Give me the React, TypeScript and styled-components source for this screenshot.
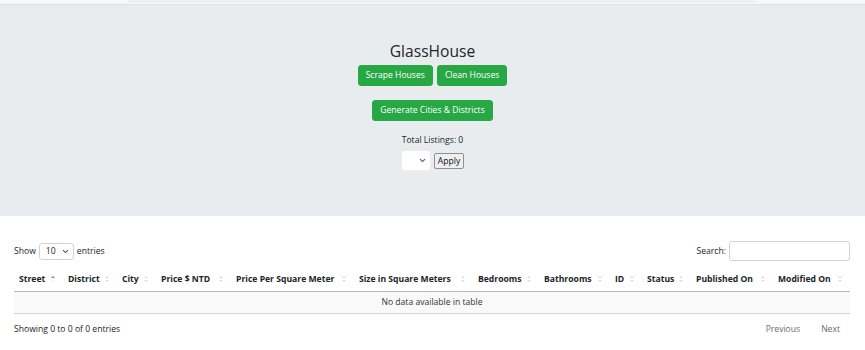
import React from "react";
import styled, { createGlobalStyle } from "styled-components";

const Global = createGlobalStyle`
  html, body { margin: 0; padding: 0; background: #fff; }
  body {
    font-family: "Open Sans", "Noto Sans", "Liberation Sans", sans-serif;
    color: #212529;
    width: 865px;
    overflow: hidden;
  }
  * { box-sizing: border-box; }
`;

const TopStrip = styled.div`
  height: 5px;
  background: #f8f8fa;
  border-bottom: 1px solid #dfe0e3;
  display: flex;
`;

const TopTab = styled.div`
  margin-left: 128px;
  width: 628px;
  height: 3px;
  background: #efeff2;
`;

const Jumbo = styled.section`
  background: #e9ecef;
  height: 211px;
  display: flex;
  flex-direction: column;
  align-items: center;
  padding-top: 36px;
`;

const Title = styled.h1`
  margin: 0;
  font-size: 15.6px;
  font-weight: 400;
  line-height: 21px;
  color: #212529;
`;

const ButtonRow = styled.div<{ $mt: number }>`
  display: flex;
  gap: 4px;
  margin-top: ${(p) => p.$mt}px;
`;

const GreenButton = styled.button`
  font-family: inherit;
  background: #28a745;
  border: 1px solid #28a745;
  color: #fff;
  font-size: 8.6px;
  height: 21px;
  padding: 0 7px;
  border-radius: 3px;
  line-height: 19px;
`;

const Total = styled.div`
  margin-top: 12px;
  font-size: 8.6px;
  line-height: 14px;
`;

const FilterRow = styled.div`
  display: flex;
  align-items: center;
  gap: 3px;
  margin-top: 3px;
`;

const SelectBox = styled.div<{ $w: number; $h: number }>`
  width: ${(p) => p.$w}px;
  height: ${(p) => p.$h}px;
  background: #fff;
  border: 1px solid ${(p) => (p.$h > 19 ? "#eceef0" : "#cfd3d7")};
  border-radius: 3px;
  display: flex;
  align-items: center;
  justify-content: space-between;
  padding: 0 4px 0 6px;
  font-size: 8.6px;
`;

const Chevron = () => (
  <svg width="7" height="5" viewBox="0 0 7 5">
    <path d="M1 1.2 L3.5 3.6 L6 1.2" stroke="#555" strokeWidth="1.1" fill="none" />
  </svg>
);

const ApplyButton = styled.button`
  font-family: inherit;
  font-size: 8.6px;
  height: 16px;
  padding: 0 3px;
  background: #efefef;
  border: 1px solid #8f8f8f;
  border-radius: 2px;
  color: #111;
  line-height: 14px;
`;

const TableArea = styled.section`
  padding: 24px 15px 0 14px;
`;

const Controls = styled.div`
  display: flex;
  justify-content: space-between;
  align-items: center;
  height: 22px;
  font-size: 8.6px;
`;

const Inline = styled.label`
  display: flex;
  align-items: center;
  gap: 3px;
`;

const SearchInput = styled.div`
  width: 121px;
  height: 20px;
  border: 1px solid #cfd3d7;
  border-radius: 3px;
  background: #fff;
`;

const Table = styled.table`
  margin-top: 5px;
  width: 836px;
  border-collapse: collapse;
  table-layout: fixed;
  font-size: 8.6px;
`;

const Th = styled.th`
  text-align: left;
  font-weight: 700;
  height: 24px;
  padding: 0 0 0 5px;
  border-bottom: 1px solid #b7b7b7;
  position: relative;
  white-space: nowrap;
`;

const SortIcon = styled.span`
  position: absolute;
  right: 8px;
  top: 50%;
  transform: translateY(-50%);
  display: flex;
  flex-direction: column;
  gap: 2px;
`;

const Tri = styled.span<{ $up: boolean; $dark: boolean }>`
  width: 0;
  height: 0;
  border-left: 2px solid transparent;
  border-right: 2px solid transparent;
  ${(p) =>
    p.$up
      ? `border-bottom: 2.5px solid ${p.$dark ? "#888" : "#ddd"};`
      : `border-top: 2.5px solid ${p.$dark ? "#f3f3f3" : "#ddd"};`}
`;

const Td = styled.td`
  text-align: center;
  height: 22px;
  background: #f9f9f9;
  border-bottom: 1px solid #d5d5d5;
  color: #333;
`;

const Footer = styled.div`
  display: flex;
  justify-content: space-between;
  align-items: center;
  height: 30px;
  font-size: 8.6px;
`;

const Pager = styled.div`
  display: flex;
  gap: 21px;
  color: #6c6c6c;
  padding-right: 10px;
`;

const columns: [string, number][] = [
  ["Street", 49],
  ["District", 54],
  ["City", 39],
  ["Price $ NTD", 75],
  ["Price Per Square Meter", 123],
  ["Size in Square Meters", 119],
  ["Bedrooms", 66],
  ["Bathrooms", 71],
  ["ID", 32],
  ["Status", 49],
  ["Published On", 82],
  ["Modified On", 77],
];

export default function App() {
  return (
    <>
      <Global />
      <TopStrip>
        <TopTab />
      </TopStrip>
      <Jumbo>
        <Title>GlassHouse</Title>
        <ButtonRow $mt={3}>
          <GreenButton>Scrape Houses</GreenButton>
          <GreenButton>Clean Houses</GreenButton>
        </ButtonRow>
        <ButtonRow $mt={14}>
          <GreenButton>Generate Cities &amp; Districts</GreenButton>
        </ButtonRow>
        <Total>Total Listings: 0</Total>
        <FilterRow>
          <SelectBox $w={30} $h={21}>
            <span />
            <Chevron />
          </SelectBox>
          <ApplyButton>Apply</ApplyButton>
        </FilterRow>
      </Jumbo>
      <TableArea>
        <Controls>
          <Inline>
            Show
            <SelectBox $w={35} $h={17}>
              <span>10</span>
              <Chevron />
            </SelectBox>
            entries
          </Inline>
          <Inline>
            Search:
            <SearchInput />
          </Inline>
        </Controls>
        <Table>
          <colgroup>
            {columns.map(([n, w]) => (
              <col key={n} style={{ width: w }} />
            ))}
          </colgroup>
          <thead>
            <tr>
              {columns.map(([n], i) => (
                <Th key={n}>
                  {n}
                  <SortIcon>
                    <Tri $up={true} $dark={i === 0} />
                    <Tri $up={false} $dark={i === 0} />
                  </SortIcon>
                </Th>
              ))}
            </tr>
          </thead>
          <tbody>
            <tr>
              <Td colSpan={12}>No data available in table</Td>
            </tr>
          </tbody>
        </Table>
        <Footer>
          <span>Showing 0 to 0 of 0 entries</span>
          <Pager>
            <span>Previous</span>
            <span>Next</span>
          </Pager>
        </Footer>
      </TableArea>
    </>
  );
}
